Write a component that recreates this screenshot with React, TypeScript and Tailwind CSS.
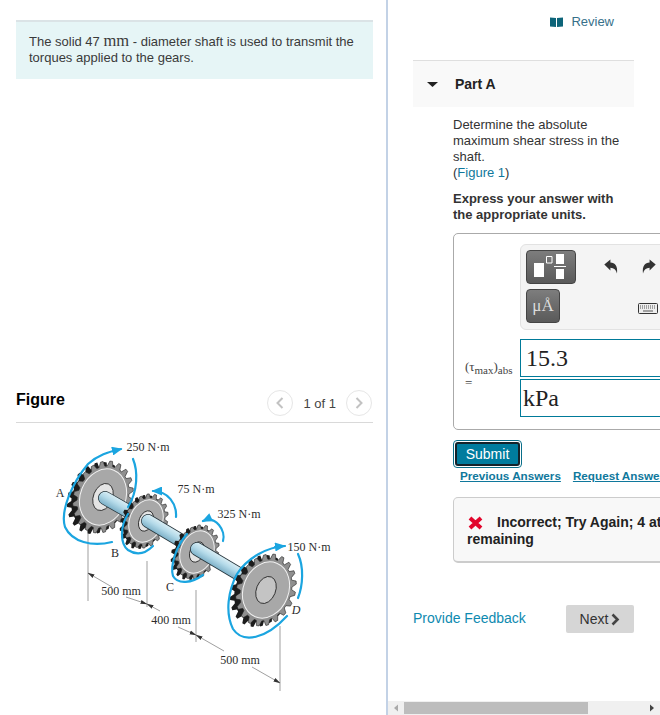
import React from 'react';

// toothed ellipse, tilted, returned as a path
const gearPath = (cx: number, cy: number, rx: number, ry: number, rot: number, teeth: number) => {
  const r = (rot * Math.PI) / 180;
  const pts: string[] = [];
  const put = (a: number, k: number) => {
    const x = rx * k * Math.cos(a);
    const y = ry * k * Math.sin(a);
    pts.push(`${(cx + x * Math.cos(r) - y * Math.sin(r)).toFixed(1)} ${(cy + x * Math.sin(r) + y * Math.cos(r)).toFixed(1)}`);
  };
  const step = (Math.PI * 2) / teeth;
  for (let i = 0; i < teeth; i++) {
    const a = i * step;
    put(a, 0.86);
    put(a + step * 0.22, 1);
    put(a + step * 0.5, 1);
    put(a + step * 0.72, 0.86);
  }
  return `M${pts.join('L')}Z`;
};

const Gear = ({ cx, cy, rx, ry, teeth, hub }: { cx: number; cy: number; rx: number; ry: number; teeth: number; hub: boolean }) => (
  <g>
    <path d={gearPath(cx - rx * 0.2, cy + 1, rx, ry, 22, teeth)} fill="#1c1c1c" />
    <path d={gearPath(cx, cy, rx, ry, 22, teeth)} fill="#8f8f8f" stroke="#1c1c1c" strokeWidth="0.6" />
    <ellipse cx={cx} cy={cy} rx={rx * 0.78} ry={ry * 0.78} transform={`rotate(22 ${cx} ${cy})`} fill="#a8a8a8" stroke="#f2f2f2" strokeWidth="1" />
    <ellipse cx={cx} cy={cy} rx={rx * 0.33} ry={ry * 0.38} transform={`rotate(22 ${cx} ${cy})`} fill={hub ? '#e4e4e4' : '#c4c4c4'} stroke="#222" strokeWidth="0.8" />
  </g>
);

const Shaft = ({ id, x1, y1, x2, y2 }: { id: string; x1: number; y1: number; x2: number; y2: number }) => {
  const mx = (x1 + x2) / 2;
  const my = (y1 + y2) / 2;
  return (
    <g strokeLinecap="round">
      <linearGradient id={id} gradientUnits="userSpaceOnUse" x1={mx + 3.5} y1={my - 6} x2={mx - 3.5} y2={my + 6}>
        <stop offset="0" stopColor="#dceff5" />
        <stop offset="0.45" stopColor="#b4dae9" />
        <stop offset="1" stopColor="#7aaec6" />
      </linearGradient>
      <line x1={x1} y1={y1} x2={x2} y2={y2} stroke="#25343b" strokeWidth="14" />
      <line x1={x1} y1={y1} x2={x2} y2={y2} stroke={`url(#${id})`} strokeWidth="12.5" />
    </g>
  );
};

const Label = ({ x, y, children, italic }: { x: number; y: number; children: React.ReactNode; italic?: boolean }) => (
  <text x={x} y={y} textAnchor="middle" fontSize="12" fontStyle={italic ? 'italic' : 'normal'} fill="#2c2c2c" style={{ fontFamily: '"Liberation Serif", serif' }}>
    {children}
  </text>
);

const ShaftFigure = () => (
  <svg width="360" height="270" viewBox="16 430 360 270" className="block">
    <defs>
      <marker id="tip" viewBox="0 0 7 6" markerUnits="userSpaceOnUse" markerWidth="11" markerHeight="9" refX="6" refY="3" orient="auto">
        <path d="M0 0L7 3L0 6Z" fill="#1ba5e0" />
      </marker>
      <marker id="dim" viewBox="0 0 7 5" markerUnits="userSpaceOnUse" markerWidth="7" markerHeight="5" refX="6.5" refY="2.5" orient="auto-start-reverse">
        <path d="M0 0.5L7 2.5L0 4.5Z" fill="#333" />
      </marker>
    </defs>

    {/* dimension lines */}
    <g stroke="#777" strokeWidth="0.7" fill="none">
      <path d="M88 505V600M147 560V606M196 589V641M280 625V690" />
      <path d="M88 572L112 586" markerStart="url(#dim)" />
      <path d="M126 596L147 603" markerEnd="url(#dim)" />
      <path d="M147 603L160 610" markerStart="url(#dim)" />
      <path d="M178 626L196 634" markerEnd="url(#dim)" />
      <path d="M196 634L224 650" markerStart="url(#dim)" />
      <path d="M252 666L280 682" markerEnd="url(#dim)" />
    </g>

    <Gear cx={103} cy={496} rx={29} ry={37} teeth={20} hub />
    <Shaft id="shaftA" x1={105} y1={497} x2={140} y2={517} />
    <Gear cx={146} cy={520} rx={21} ry={28} teeth={18} hub />
    <Shaft id="shaftB" x1={148} y1={520} x2={190} y2={545} />
    <Gear cx={197} cy={551} rx={21} ry={28} teeth={18} hub />
    <Shaft id="shaftC" x1={197} y1={548} x2={244} y2={576} />
    <Gear cx={266} cy={589} rx={29} ry={37} teeth={20} hub={false} />

    {/* torque arrows */}
    <g stroke="#1ba5e0" strokeWidth="2.2" fill="none" strokeLinecap="round">
      <path d="M112 541C92 546 72 541 65 526C60 510 72 482 88 463C98 454 108 451 121 448" markerEnd="url(#tip)" />
      <path d="M133 458C138 470 138 490 128 506" />
      <path d="M176 516C177 503 168 490 153 490" markerEnd="url(#tip)" />
      <path d="M128 513C120 525 120 543 128 549C137 555 146 552 153 545" />
      <path d="M223 540C226 530 216 514 203 520" markerEnd="url(#tip)" />
      <path d="M187 533C176 545 170 565 173 575C178 584 192 582 203 574" />
      <path d="M285 545C268 546 248 556 237 573C228 590 225 612 233 628C243 643 266 638 287 615" />
      <path d="M275 546L284 545" markerEnd="url(#tip)" />
      <path d="M298 553C304 566 303 584 298 597" />
    </g>

    <Label x={148} y={450}>250 N·m</Label>
    <Label x={196} y={492}>75 N·m</Label>
    <Label x={239} y={517}>325 N·m</Label>
    <Label x={309} y={550}>150 N·m</Label>
    <Label x={60} y={496}>A</Label>
    <Label x={115} y={556}>B</Label>
    <Label x={170} y={590}>C</Label>
    <Label x={296} y={613} italic>D</Label>
    <Label x={121} y={594}>500 mm</Label>
    <Label x={171} y={623}>400 mm</Label>
    <Label x={240} y={663}>500 mm</Label>
  </svg>
);

const PagerButton = ({ d }: { d: string }) => (
  <div className="flex h-[26px] w-[26px] items-center justify-center rounded-full border border-[#e6e6e6]">
    <svg width="12" height="14" viewBox="0 0 12 14" fill="none" stroke="#c2c2c2" strokeWidth="2">
      <path d={d} />
    </svg>
  </div>
);

const ArrowGlyph = ({ flip }: { flip?: boolean }) => (
  <svg width="14" height="15" viewBox="0 0 14 15" className={flip ? '-scale-x-100' : ''}>
    <path d="M0.3 5.6L6.4 0.4V3.4C11 3.6 14 6.6 13 14.6C12 10.8 10 9 6.4 8.8V11.4Z" fill="#333" />
  </svg>
);

export default function App(): React.ReactElement {
  return (
    <div className="flex h-[715px] w-[660px] overflow-hidden bg-white text-[13px] leading-4 text-[#333]" style={{ fontFamily: '"Liberation Sans", Arial, sans-serif' }}>
      {/* left pane */}
      <div className="w-[386px] shrink-0 pl-4 pr-[13px] pt-5">
        <div className="h-[59px] border-t-2 border-[#dbe3e6] bg-[#e6f5f6] px-[13px] pt-[11px] text-[#3a3a3a]">
          The solid 47 <span className="text-[16.5px] leading-4" style={{ fontFamily: '"Liberation Serif", serif' }}>mm</span> - diameter shaft is used to transmit the torques applied to the gears.
        </div>

        <div className="mt-[311px] flex h-[33px] items-start justify-between border-b border-[#d9d9d9]">
          <div className="mt-[1px] text-[16px] font-bold leading-[18px] text-black">Figure</div>
          <div className="mr-[1px] flex items-center">
            <PagerButton d="M8.5 2L3.5 7L8.5 12" />
            <span className="mx-[10px] mt-[1px] text-[#444]">1 of 1</span>
            <PagerButton d="M3.5 2L8.5 7L3.5 12" />
          </div>
        </div>
        <div className="mt-2">
          <ShaftFigure />
        </div>
      </div>

      <div className="w-[2px] shrink-0 bg-[#c3d2e6]" />

      {/* right pane */}
      <div className="flex min-w-0 flex-1 flex-col">
        <div className="h-[701px] overflow-hidden pl-[25px]">
          <div className="flex h-[60px] items-start justify-end pr-[46px] pt-[14px]">
            <div className="flex items-center gap-2 text-[#37708a]">
              <svg width="13" height="10" viewBox="0 0 13 10" fill="#0d6479">
                <path d="M0 0.5L6 1V10L0 9.5ZM7 1L13 0.5V9.5L7 10Z" />
              </svg>
              <span>Review</span>
            </div>
          </div>

          <div className="flex h-[47px] w-[221px] items-center border-t border-[#dfdfdf] bg-[#f9f9f9]">
            <svg width="11" height="5" viewBox="0 0 11 5" className="ml-[14px]" fill="#222">
              <path d="M0 0H11L5.5 5Z" />
            </svg>
            <span className="ml-[17px] text-[14px] font-bold text-[#222]">Part A</span>
          </div>

          <div className="ml-10 mt-[10px] w-[175px]">
            <p>
              Determine the absolute maximum shear stress in the shaft.
              <br />
              (<span className="text-[#10789c]">Figure 1</span>)
            </p>
            <p className="mt-[10px] font-bold">Express your answer with the appropriate units.</p>
          </div>

          <div className="ml-10 mt-[10px] h-[197px] w-[300px] rounded-[5px] border border-[#aaa] pl-[66px] pt-[10px]">
            <div className="flex h-[86px] w-[200px] rounded-[6px] border border-[#e2e2e2] bg-[#f4f4f4] pl-[5px] pt-[5px]">
              <div className="flex flex-col gap-[5px]">
                <div className="h-[34px] w-[50px] rounded-[4px] border border-[#444] bg-gradient-to-b from-[#7d7d7d] to-[#5a5a5a]">
                  <svg width="48" height="32" viewBox="0 0 48 32" fill="#fff" className="block">
                    <path d="M7 12H17V26H7Z" />
                    <path d="M19.5 5.5H25V12H19.5Z" fill="none" stroke="#fff" strokeWidth="1" />
                    <path d="M29 3H37V13H29ZM29 18H37V28H29Z" />
                    <path d="M27 15H39V16H27Z" />
                  </svg>
                </div>
                <div className="flex h-[34px] w-[34px] items-center justify-center rounded-[4px] border border-[#444] bg-gradient-to-b from-[#7d7d7d] to-[#5a5a5a] text-[17px] text-[#ddd]" style={{ fontFamily: '"Liberation Serif", serif' }}>
                  μÅ
                </div>
              </div>
              <div className="ml-[28px] flex flex-col">
                <div className="mt-[9px] flex gap-[24px]">
                  <ArrowGlyph />
                  <ArrowGlyph flip />
                </div>
                <svg width="20" height="11" viewBox="0 0 20 11" className="ml-[34px] mt-[29px]">
                  <rect x="0.5" y="0.5" width="19" height="10" rx="1" fill="#eee" stroke="#333" />
                  <path d="M2 3H18M2 5H18" stroke="#555" strokeDasharray="1 1" />
                  <path d="M5 8H15" stroke="#555" />
                </svg>
              </div>
            </div>

            <div className="relative mt-[9px]">
              <div className="absolute left-[-55px] top-[20px] text-[13px] leading-4 text-[#444]" style={{ fontFamily: '"Liberation Serif", serif' }}>
                <div className="whitespace-nowrap">
                  (τ<sub className="text-[11px]">max</sub>)<sub className="text-[11px]">abs</sub>
                </div>
                <div>=</div>
              </div>
              <div className="h-[38px] border border-[#007a99] pl-[5px] text-[24px] leading-[36px] text-[#222]" style={{ fontFamily: '"Liberation Serif", serif' }}>15.3</div>
              <div className="mt-[2px] h-[38px] border border-[#007a99] pl-[2px] text-[24px] leading-[36px] text-[#222]" style={{ fontFamily: '"Liberation Serif", serif' }}>kPa</div>
            </div>
          </div>

          <div className="ml-10 mt-[10px] h-[28px] w-[69px] rounded-[4px] border border-[#0a6f8a] p-[1px] text-[14px]">
            <div className="flex h-full items-center justify-center rounded-[3px] border-2 border-[#14232b] bg-[#007c9e] text-white">Submit</div>
          </div>

          <div className="ml-[47px] flex gap-3 whitespace-nowrap text-[11.7px] font-bold leading-4 text-[#10789c]">
            <span className="underline">Previous Answers</span>
            <span className="underline">Request Answer</span>
          </div>

          <div className="ml-10 mt-[13px] h-[66px] w-[300px] rounded-[5px] border border-b-2 border-[#ccc] bg-[#f8f8f8] pl-[13px] pt-[16px] text-[14px] font-bold leading-[17px] text-[#222]">
            <div className="flex items-center whitespace-nowrap">
              <svg width="15" height="14" viewBox="0 0 15 14" className="ml-[1px]">
                <path d="M2 2L13 12M13 2L2 12" stroke="#e2062c" strokeWidth="4" />
              </svg>
              <span className="ml-[14px]">Incorrect; Try Again; 4 attempts</span>
            </div>
            <div>remaining</div>
          </div>

          <div className="mt-[42px] flex w-[221px] items-center justify-between text-[14px]">
            <span className="mb-[2px] text-[#0e8ab0]">Provide Feedback</span>
            <div className="flex h-[28px] w-[68px] items-center justify-center gap-[3px] rounded-[2px] bg-[#d6d6d6] text-[#333]">
              Next
              <svg width="9" height="13" viewBox="0 0 9 13" fill="none" stroke="#444" strokeWidth="2.6">
                <path d="M1.5 1.5L6.5 6.5L1.5 11.5" />
              </svg>
            </div>
          </div>
        </div>

        {/* horizontal scrollbar */}
        <div className="flex h-[14px] items-center bg-[#f0f0f0]">
          <svg width="16" height="14" viewBox="0 0 16 14" fill="#aaa">
            <path d="M6 7L10 3.5V10.5Z" />
          </svg>
          <div className="h-[12px] w-[184px] bg-[#bdbdbd]" />
          <div className="flex-1" />
          <svg width="16" height="14" viewBox="0 0 16 14" fill="#444">
            <path d="M10 7L6 3.5V10.5Z" />
          </svg>
        </div>
      </div>
    </div>
  );
}
